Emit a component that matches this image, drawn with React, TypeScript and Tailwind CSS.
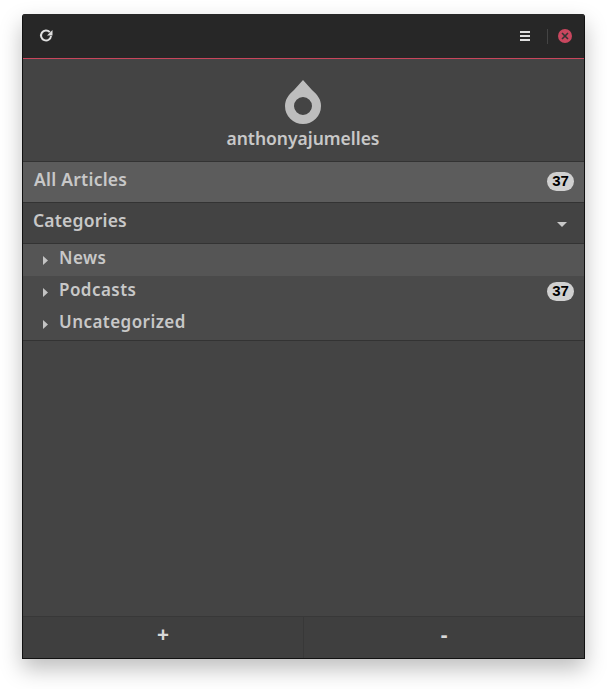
import React from "react";

const font = { fontFamily: '"Noto Sans", "Liberation Sans", sans-serif' };

const Badge = () => (
  <span className="-mt-[2px] flex h-[19px] w-[27px] items-center justify-center rounded-full bg-[#d0d0d0] text-[15px] font-bold text-black [font-family:'Liberation_Sans',sans-serif]">
    37
  </span>
);

const Arrow = () => (
  <svg width="5" height="9" viewBox="0 0 5 9" className="mt-[1px] shrink-0">
    <path d="M0 0 L5 4.5 L0 9 Z" fill="#c4c4c4" />
  </svg>
);

const CategoryRow = ({ label, count, active }: { label: string; count?: boolean; active?: boolean }) => (
  <div className={`flex h-8 items-center pl-[20px] pr-[10px] ${active ? "bg-[#555555]" : ""}`}>
    <Arrow />
    <span className="-mt-[6px] ml-[11px] flex-1 text-[17px] font-semibold leading-none tracking-[0.45px] text-[#c8c8c8]">
      {label}
    </span>
    {count && <Badge />}
  </div>
);

export default function App() {
  return (
    <div className="h-[689px] w-[607px] bg-white pl-[22px] pt-[14px]" style={font}>
      <div className="flex h-[645px] w-[563px] flex-col overflow-hidden rounded-t-[3px] border border-t-0 border-[#111111] bg-[#444444] shadow-[0_10px_22px_rgba(0,0,0,0.26)]">
        {/* headerbar */}
        <div className="flex h-[45px] shrink-0 items-center border-b border-b-[#c8465c] bg-[#272727] pl-[16px] pr-[12px]">
          <svg width="14" height="14" viewBox="0 0 14 14" fill="none">
            <path d="M10.8 3.2 A5 5 0 1 0 12 7" stroke="#e0e0e0" strokeWidth="2" />
            <path d="M8 6.5 L13.5 6.5 L13.5 1 Z" fill="#e0e0e0" />
          </svg>
          <div className="flex-1" />
          <div className="flex w-[10px] flex-col gap-[2px]">
            <div className="h-[2px] bg-[#e0e0e0]" />
            <div className="h-[2px] bg-[#e0e0e0]" />
            <div className="h-[2px] bg-[#e0e0e0]" />
          </div>
          <div className="ml-[17px] h-[15px] w-px bg-[#444444]" />
          <div className="ml-[10px] flex h-[14px] w-[14px] items-center justify-center rounded-full bg-[#c9475f]">
            <svg width="8" height="8" viewBox="0 0 8 8">
              <path d="M1 1 L7 7 M7 1 L1 7" stroke="#333333" strokeWidth="1.6" />
            </svg>
          </div>
        </div>

        {/* account */}
        <div className="flex h-[102px] shrink-0 flex-col items-center pt-[21px]">
          <svg width="36" height="44" viewBox="0 0 36 44" className="-ml-[2px]">
            <path
              fillRule="evenodd"
              d="M18 0 L27 10 C33 15 36 20 36 26 A18 18 0 0 1 0 26 C0 20 3 15 9 10 Z M18 17 A9 9 0 1 0 18 35 A9 9 0 1 0 18 17 Z"
              fill="#bdbdbd"
            />
          </svg>
          <div className="-ml-[1px] mt-[2px] text-[17.5px] font-semibold leading-[24px] tracking-[-0.03px] text-[#c8c8c8]">
            anthonyajumelles
          </div>
        </div>

        {/* all articles */}
        <div className="flex h-[42px] shrink-0 items-center border-y border-[#333333] bg-[#5c5c5c] pl-[11px] pr-[10px]">
          <span className="-mt-[5px] flex-1 text-[17.5px] font-semibold tracking-[0.25px] text-[#c8c8c8]">All Articles</span>
          <Badge />
        </div>

        {/* categories */}
        <div className="flex h-[41px] shrink-0 items-center border-b border-[#333333] bg-[#434343] pl-[10px] pr-[17px]">
          <span className="-mt-[5px] flex-1 text-[17.5px] font-semibold tracking-[0.2px] text-[#c8c8c8]">Categories</span>
          <svg width="10" height="5" viewBox="0 0 10 5" className="mt-[3px]">
            <path d="M0 0 L10 0 L5 5 Z" fill="#c8c8c8" />
          </svg>
        </div>

        <div className="shrink-0 border-b border-[#333333] bg-[#4a4a4a]">
          <CategoryRow label="News" active />
          <CategoryRow label="Podcasts" count />
          <CategoryRow label="Uncategorized" />
        </div>

        <div className="flex-1" />

        {/* footer */}
        <div className="flex h-[42px] shrink-0 border-t border-[#383838] bg-[#3f3f3f] font-bold text-[#d8d8d8]">
          <div className="flex w-[281px] items-center justify-center border-r border-[#383838] pb-[6px] text-[21px] leading-none">+</div>
          <div className="flex flex-1 items-center justify-center pb-[6px] text-[21px] leading-none">-</div>
        </div>
      </div>
    </div>
  );
}
